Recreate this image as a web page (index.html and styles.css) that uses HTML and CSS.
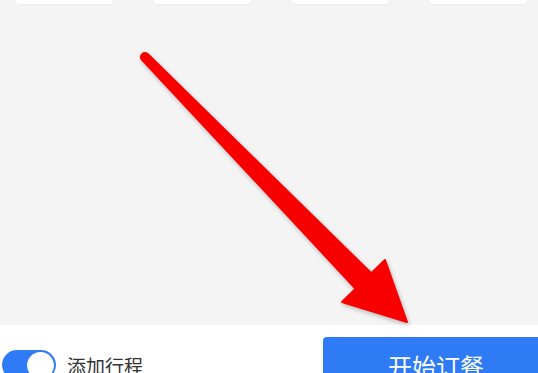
FILE: index.html
```html
<!DOCTYPE html>
<html lang="zh">
<head>
  <meta charset="UTF-8">
  <title>订餐</title>
  <link rel="stylesheet" href="styles.css">
</head>
<body>
  <div class="page">

    <!-- 顶部卡片 (只露出底边) -->
    <div class="cards">
      <div class="card"></div>
      <div class="card"></div>
      <div class="card"></div>
      <div class="card"></div>
    </div>

    <div class="space"></div>

    <!-- 底部栏 -->
    <div class="bottom-bar">
      <div class="trip">
        <span class="switch on"><span class="knob"></span></span>
        <span class="trip-label">添加行程</span>
      </div>
      <button class="btn-order">开始订餐</button>
    </div>

    <!-- 红色箭头标注 -->
    <svg class="arrow" width="538" height="373" viewBox="0 0 538 373">
      <path d="M147.9 54.2 L371.3 273.3 L385 260 L407 322 L342 302 L355.7 288.7 L142.1 59.8 A4 4 0 0 1 147.9 54.2 Z"
            fill="#f80000" stroke="#f80000" stroke-width="2" stroke-linejoin="round"/>
    </svg>

  </div>
</body>
</html>
```

FILE: styles.css
```css
* { margin: 0; padding: 0; box-sizing: border-box; font-family: "Noto Sans CJK SC", "Noto Sans", sans-serif; }

body { background: #f4f4f4; }

.page {
  position: relative;
  width: 538px;
  height: 373px;
  overflow: hidden;
  display: flex;
  flex-direction: column;
}

.cards {
  display: flex;
  gap: 41px;
  padding-left: 16px;
  height: 4px;
}

.card {
  width: 97px;
  height: 4px;
  background: #fff;
  border-radius: 0 0 5px 5px;
  box-shadow: 0 1px 2px rgba(0,0,0,0.04);
}

.space { flex: 1; }

.bottom-bar {
  height: 48px;
  background: #fff;
  display: flex;
  align-items: flex-start;
}

.trip {
  display: flex;
  align-items: center;
  margin-top: 25px;
  margin-left: 2px;
}

.switch {
  width: 54px;
  height: 30px;
  border-radius: 15px;
  background: #2f7bf5;
  display: flex;
  align-items: center;
  justify-content: flex-end;
  padding-right: 2px;
}

.knob {
  width: 27px;
  height: 27px;
  border-radius: 50%;
  background: #fff;
}

.trip-label {
  margin-left: 11px;
  font-size: 19px;
  line-height: 1;
  color: #333;
}

.btn-order {
  margin-left: auto;
  margin-top: 12px;
  width: 215px;
  height: 60px;
  border: none;
  border-radius: 4px 0 0 0;
  background: #2f7bf5;
  color: #fff;
  font-size: 24px;
  line-height: 1;
  text-align: left;
  padding: 0 0 0 65px;
  align-self: flex-start;
  display: flex;
  align-items: flex-start;
  padding-top: 17px;
}

.arrow {
  position: absolute;
  top: 0;
  left: 0;
  pointer-events: none;
  filter: drop-shadow(1px 2px 2px rgba(0,0,0,0.25));
}
```
